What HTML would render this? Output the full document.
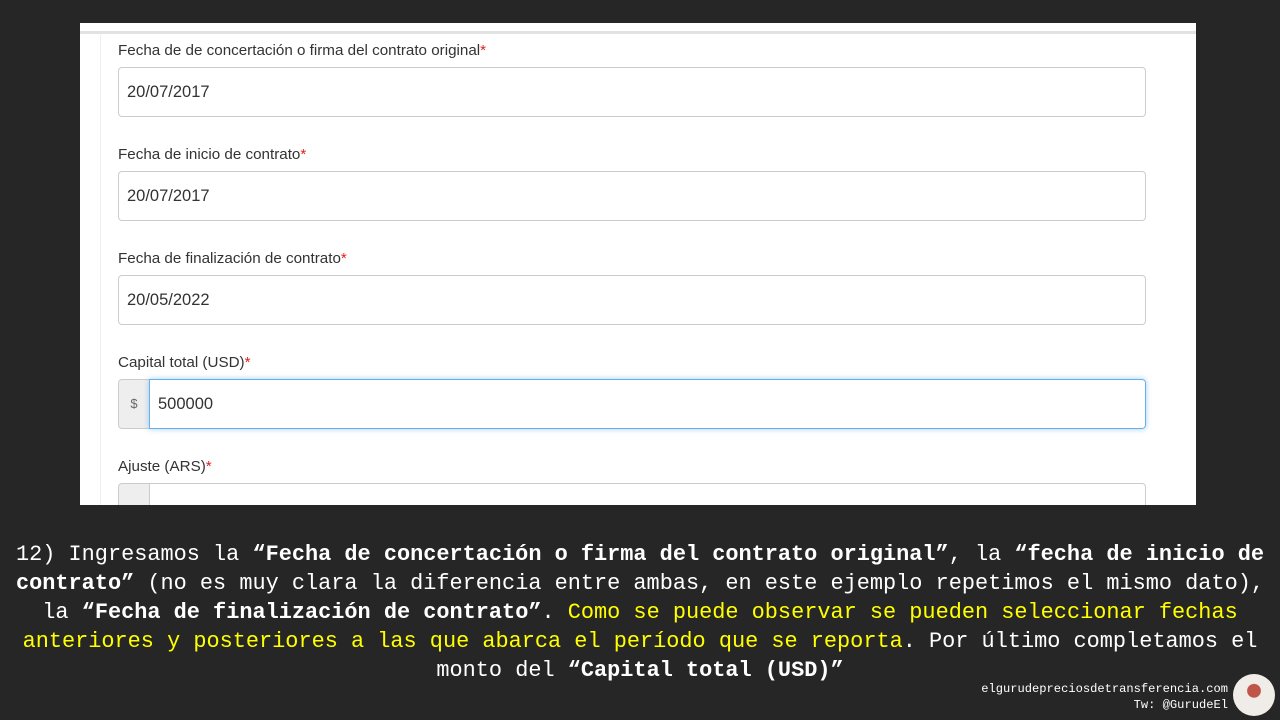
<!DOCTYPE html>
<html><head><meta charset="utf-8"><style>
body{margin:0;width:1280px;height:720px;background:#262626;overflow:hidden;position:relative;font-family:"Liberation Sans",sans-serif}
.shot{position:absolute;left:80px;top:23px;width:1116px;height:482px;background:#fff;overflow:hidden}
.topline{position:absolute;left:0;top:8px;width:100%;height:3px;background:#e2e2e2}
.vline{position:absolute;left:20px;top:10px;width:1px;height:480px;background:#eee}
.lbl{position:absolute;left:38px;font-size:15.2px;color:#333}
.lbl b{color:#e02020;font-weight:normal}
.inp{position:absolute;left:38px;width:1028px;height:50px;border:1px solid #ccc;border-radius:4px;font-size:16.5px;color:#333;line-height:48px;padding-left:8px;box-sizing:border-box}
.addon{position:absolute;left:38px;width:32px;height:50px;border:1px solid #ccc;border-radius:4px 0 0 4px;background:#eee;color:#666;font-size:13px;line-height:48px;text-align:center;box-sizing:border-box}
.foc{position:absolute;left:69px;width:997px;height:50px;border:1px solid #66afe9;border-radius:0 4px 4px 0;box-shadow:0 0 6px rgba(102,175,233,.6);font-size:16.5px;color:#333;line-height:48px;padding-left:8px;box-sizing:border-box}
.cap{position:absolute;left:0;top:540px;width:1280px;text-align:center;font-family:"Liberation Mono",monospace;font-size:21.9px;line-height:29px;color:#fff}
.y{color:#ffff00}
.ft{position:absolute;right:52px;top:681px;text-align:right;font-family:"Liberation Mono",monospace;font-size:12.1px;line-height:16px;color:#fff}
.av{position:absolute;left:1233px;top:674px;width:42px;height:42px;border-radius:50%;background:radial-gradient(circle at 50% 40%,#c0564a 0 20%,#f0ece8 22% 100%)}
</style></head><body>
<div class="shot">
<div class="topline"></div><div class="vline"></div>
<div class="lbl" style="top:19px">Fecha de de concertación o firma del contrato original<b>*</b></div>
<div class="inp" style="top:44px">20/07/2017</div>
<div class="lbl" style="top:123px">Fecha de inicio de contrato<b>*</b></div>
<div class="inp" style="top:148px">20/07/2017</div>
<div class="lbl" style="top:227px">Fecha de finalización de contrato<b>*</b></div>
<div class="inp" style="top:252px">20/05/2022</div>
<div class="lbl" style="top:331px">Capital total (USD)<b>*</b></div>
<div class="addon" style="top:356px">$</div>
<div class="foc" style="top:356px">500000</div>
<div class="lbl" style="top:435px">Ajuste (ARS)<b>*</b></div>
<div class="addon" style="top:460px"></div>
<div class="inp" style="top:460px;left:69px;width:997px;border-radius:0 4px 4px 0"></div>
</div>
<div class="cap">12) Ingresamos la <b>“Fecha de concertación o firma del contrato original”</b>, la <b>“fecha de inicio de<br>contrato”</b> (no es muy clara la diferencia entre ambas, en este ejemplo repetimos el mismo dato),<br>la <b>“Fecha de finalización de contrato”</b>. <span class="y">Como se puede observar se pueden seleccionar fechas<br>anteriores y posteriores a las que abarca el período que se reporta</span>. Por último completamos el<br>monto del <b>“Capital total (USD)”</b></div>
<div class="ft">elgurudepreciosdetransferencia.com<br>Tw: @GurudeEl</div>
<div class="av"></div>
</body></html>
